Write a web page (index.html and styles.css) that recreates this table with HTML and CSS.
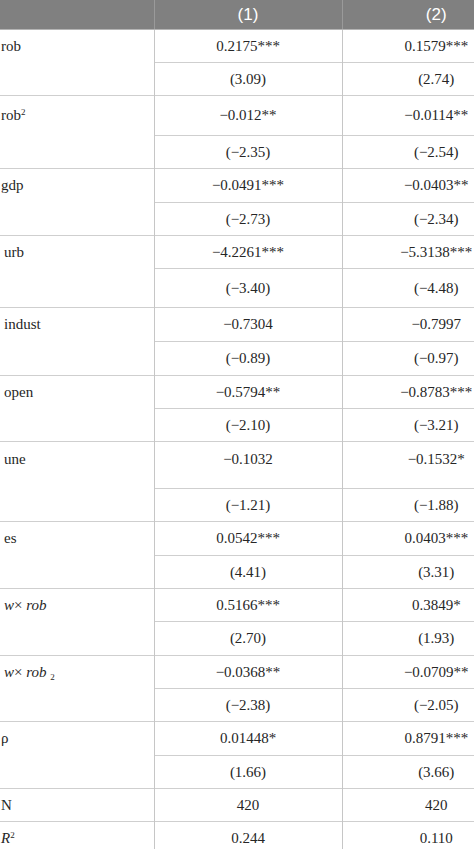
FILE: index.html
```html
<!DOCTYPE html>
<html>
<head>
<meta charset="utf-8">
<link rel="stylesheet" href="styles.css">
</head>
<body>
<div class="frame">
<table class="tbl">
  <colgroup><col class="c0"><col class="c1"><col class="c2"></colgroup>
  <thead>
    <tr class="hd"><th></th><th>(1)</th><th>(2)</th></tr>
  </thead>
  <tbody>
    <tr class="h33"><td class="lb">rob</td><td>0.2175***</td><td>0.1579***</td></tr>
    <tr class="h33 sub"><td class="lb"></td><td>(3.09)</td><td>(2.74)</td></tr>

    <tr class="h40"><td class="lb">rob<sup>2</sup></td><td>−0.012**</td><td>−0.0114**</td></tr>
    <tr class="h33 sub"><td class="lb"></td><td>(−2.35)</td><td>(−2.54)</td></tr>

    <tr class="h34"><td class="lb">gdp</td><td>−0.0491***</td><td>−0.0403**</td></tr>
    <tr class="h33 sub"><td class="lb"></td><td>(−2.73)</td><td>(−2.34)</td></tr>

    <tr class="h33"><td class="lb in">urb</td><td>−4.2261***</td><td>−5.3138***</td></tr>
    <tr class="h39 sub"><td class="lb"></td><td>(−3.40)</td><td>(−4.48)</td></tr>

    <tr class="h34"><td class="lb in">indust</td><td>−0.7304</td><td>−0.7997</td></tr>
    <tr class="h34 sub"><td class="lb"></td><td>(−0.89)</td><td>(−0.97)</td></tr>

    <tr class="h33"><td class="lb in">open</td><td>−0.5794**</td><td>−0.8783***</td></tr>
    <tr class="h33 sub"><td class="lb"></td><td>(−2.10)</td><td>(−3.21)</td></tr>

    <tr class="h47 top"><td class="lb in">une</td><td>−0.1032</td><td>−0.1532*</td></tr>
    <tr class="h33 sub"><td class="lb"></td><td>(−1.21)</td><td>(−1.88)</td></tr>

    <tr class="h34"><td class="lb in">es</td><td>0.0542***</td><td>0.0403***</td></tr>
    <tr class="h33 sub"><td class="lb"></td><td>(4.41)</td><td>(3.31)</td></tr>

    <tr class="h33"><td class="lb in"><i>w</i>× <i>rob</i></td><td>0.5166***</td><td>0.3849*</td></tr>
    <tr class="h34 sub"><td class="lb"></td><td>(2.70)</td><td>(1.93)</td></tr>

    <tr class="h33"><td class="lb in"><i>w</i>× <i>rob</i> <sub>2</sub></td><td>−0.0368**</td><td>−0.0709**</td></tr>
    <tr class="h33 sub"><td class="lb"></td><td>(−2.38)</td><td>(−2.05)</td></tr>

    <tr class="h34"><td class="lb">ρ</td><td>0.01448*</td><td>0.8791***</td></tr>
    <tr class="h33 sub"><td class="lb"></td><td>(1.66)</td><td>(3.66)</td></tr>

    <tr class="h33"><td class="lb">N</td><td>420</td><td>420</td></tr>
    <tr class="h33"><td class="lb"><i>R</i><sup>2</sup></td><td>0.244</td><td>0.110</td></tr>
  </tbody>
</table>
</div>
</body>
</html>
```
FILE: styles.css
```css
html, body {
  margin: 0;
  padding: 0;
  background: #ffffff;
}
.frame {
  width: 474px;
  height: 849px;
  overflow: hidden;
}
.tbl {
  border-collapse: collapse;
  table-layout: fixed;
  width: 530px;
  font-family: "Liberation Serif", "Times New Roman", serif;
  font-size: 15px;
  color: #262626;
}
.c0 { width: 154px; }
.c1 { width: 188px; }
.c2 { width: 188px; }
.hd { height: 29px; background: #808080; }
.hd th {
  padding: 0;
  font-family: "Liberation Sans", Arial, sans-serif;
  font-weight: normal;
  font-size: 17px;
  color: #ffffff;
  text-align: center;
  vertical-align: middle;
  border-left: 1px solid #9a9a9a;
  border-bottom: 1px solid #b4b4b4;
  padding-top: 1px;
}
.hd th:first-child { border-left: none; }
td {
  padding: 0;
  line-height: 16px;
  text-align: center;
  vertical-align: middle;
  border-top: 1px solid #cfcfcf;
  border-left: 1px solid #c6c6c6;
  white-space: nowrap;
}
td.lb {
  text-align: left;
  padding-left: 1px;
  border-left: none;
}
td.in { padding-left: 4px; }
.sub td.lb { border-top: none; }
.h33 { height: 33px; }
.h34 { height: 34px; }
.h39 { height: 39px; }
.h40 { height: 40px; }
.h47 { height: 47px; }
.top td { vertical-align: top; padding-top: 9px; }
sup { font-size: 9px; vertical-align: 5px; line-height: 0; }
sub { font-size: 9px; vertical-align: -3px; line-height: 0; }
i { font-style: italic; }
```
